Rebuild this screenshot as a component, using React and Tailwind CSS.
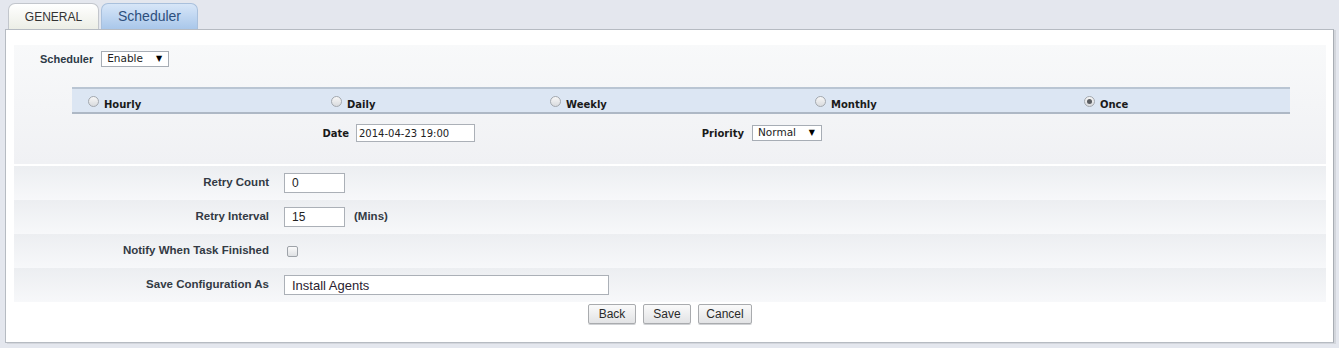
import React from "react";

const verdana = { fontFamily: '"DejaVu Sans", Verdana, sans-serif' };
const arial = { fontFamily: '"Liberation Sans", Arial, sans-serif' };

const Radio = ({ checked }) => (
  <span className="inline-flex items-center justify-center w-[11px] h-[11px] rounded-full border border-[#a3a8ae] bg-gradient-to-b from-[#f7f7f7] to-[#d9dbde] relative -top-[3px]">
    {checked && <span className="w-[5px] h-[5px] rounded-full bg-[#5a5d61]" />}
  </span>
);

const FakeSelect = ({ value, width }) => (
  <div
    className="flex items-center justify-between h-[16px] border border-[#a7adb5] bg-white pl-[5px] pr-[6px] text-[10.5px] text-[#222]"
    style={{ ...verdana, width }}
  >
    <span>{value}</span>
    <span className="text-[8px] text-black">▼</span>
  </div>
);

const Row = ({ label, children }) => (
  <div className="flex items-center h-[34px] bg-gradient-to-b from-[#eceef1] to-[#f7f8fa]">
    <div className="w-[255px] text-right text-[11.5px] font-bold text-[#333a44]" style={arial}>
      {label}
    </div>
    <div className="pl-[15px] flex items-center">{children}</div>
  </div>
);

const TextBox = ({ value, w }) => (
  <input
    readOnly
    defaultValue={value}
    className={`h-[20px] border border-[#abb0b7] bg-white px-[7px] text-[12px] text-[#222] outline-none ${w}`}
    style={arial}
  />
);

const Btn = ({ children, w }) => (
  <button
    className={`h-[20px] border border-[#a9abae] rounded-[2px] bg-gradient-to-b from-[#fafafa] to-[#e2e3e5] text-[12px] text-[#2a2a2a] shadow-[0_1px_0_#d0d2d5] ${w}`}
    style={arial}
  >
    {children}
  </button>
);

const periods = [
  { name: "Hourly", w: "w-[243px]" },
  { name: "Daily", w: "w-[219px]" },
  { name: "Weekly", w: "w-[265px]" },
  { name: "Monthly", w: "w-[269px]" },
  { name: "Once", w: "w-[150px]", checked: true },
];

export default function App() {
  return (
    <div className="h-[348px] bg-[#e4e7ee] pt-[3px] overflow-hidden">
      {/* tabs */}
      <div className="flex items-end gap-[2px] pl-[8px] h-[26px]">
        <div
          className="w-[91px] h-[26px] rounded-t-[7px] border border-b-0 border-[#c2c6cc] bg-gradient-to-b from-[#ffffff] to-[#eceee6] flex items-center justify-center text-[12px] text-[#333]"
          style={arial}
        >
          GENERAL
        </div>
        <div
          className="w-[97px] h-[26px] rounded-t-[7px] border border-b-0 border-[#a9c0dc] bg-gradient-to-b from-[#d7e6f8] to-[#a9c7ea] flex items-center justify-center text-[14px] text-[#2d4f7d]"
          style={arial}
        >
          Scheduler
        </div>
      </div>

      {/* panel */}
      <div className="ml-[5px] w-[1329px] h-[314px] border border-[#b6bbc2] border-r-[#a8adb4] bg-white pl-[8px] pr-[7px] pt-[15px] shadow-[2px_1px_0_#d3d6dc]">
        {/* scheduler block */}
        <div className="bg-gradient-to-b from-[#f8f9fa] to-[#f0f1f4] pb-[22px]">
          <div className="flex items-center h-[28px] pl-[26px] gap-[8px]">
            <span className="text-[11px] font-bold text-[#2d3a48]" style={arial}>
              Scheduler
            </span>
            <FakeSelect value="Enable" width="68px" />
          </div>

          <div className="ml-[58px] mt-[14px] w-[1218px] h-[27px] bg-[#dce6f3] border-t-2 border-t-[#b9c5d3] border-b-2 border-b-[#aeb8c5] flex items-center pl-[16px] pt-[7px]">
            {periods.map((p) => (
              <div key={p.name} className={`flex items-center gap-[5px] ${p.w}`}>
                <Radio checked={p.checked} />
                <span className="text-[10px] font-bold text-[#1a1a1a]" style={verdana}>
                  {p.name}
                </span>
              </div>
            ))}
          </div>

          <div className="ml-[58px] mt-[10px] flex items-center h-[18px]">
            <div className="w-[277px] text-right text-[10px] font-bold text-[#1a1a1a]" style={verdana}>
              Date
            </div>
            <input
              readOnly
              defaultValue="2014-04-23 19:00"
              className="ml-[7px] w-[119px] h-[18px] border border-[#abb0b7] bg-white px-[2px] text-[10px] text-[#222] outline-none"
              style={verdana}
            />
            <div className="w-[269px] text-right text-[10px] font-bold text-[#1a1a1a]" style={verdana}>
              Priority
            </div>
            <div className="ml-[8px]">
              <FakeSelect value="Normal" width="70px" />
            </div>
          </div>
        </div>

        {/* option rows */}
        <div className="mt-[2px]">
          <Row label="Retry Count">
            <TextBox value="0" w="w-[61px]" />
          </Row>
          <Row label="Retry Interval">
            <TextBox value="15" w="w-[61px]" />
            <span className="ml-[9px] text-[11.5px] font-bold text-[#333a44]" style={arial}>
              (Mins)
            </span>
          </Row>
          <Row label="Notify When Task Finished">
            <span className="ml-[3px] w-[11px] h-[11px] rounded-[2px] border border-[#9ea3a9] bg-gradient-to-b from-[#fafafa] to-[#dfe1e4]" />
          </Row>
          <Row label="Save Configuration As">
            <input
              readOnly
              defaultValue="Install Agents"
              className="w-[325px] h-[20px] border border-[#abb0b7] bg-white px-[7px] text-[13px] text-[#2a2230] outline-none"
              style={arial}
            />
          </Row>
        </div>

        {/* buttons */}
        <div className="flex justify-center gap-[7px] mt-[2px]">
          <Btn w="w-[48px]">Back</Btn>
          <Btn w="w-[48px]">Save</Btn>
          <Btn w="w-[54px]">Cancel</Btn>
        </div>
      </div>
    </div>
  );
}
